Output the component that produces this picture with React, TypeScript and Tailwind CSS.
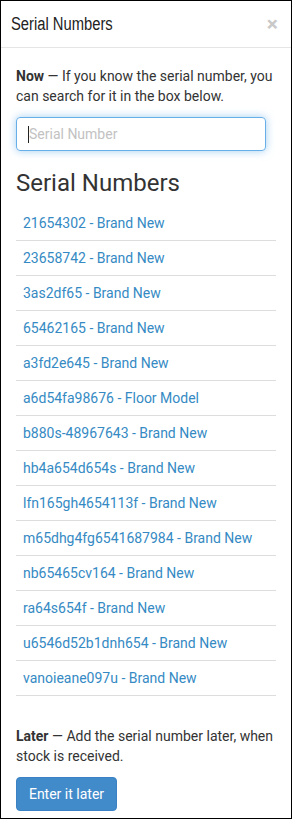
const serials = [
  '21654302 - Brand New',
  '23658742 - Brand New',
  '3as2df65 - Brand New',
  '65462165 - Brand New',
  'a3fd2e645 - Brand New',
  'a6d54fa98676 - Floor Model',
  'b880s-48967643 - Brand New',
  'hb4a654d654s - Brand New',
  'lfn165gh4654113f - Brand New',
  'm65dhg4fg6541687984 - Brand New',
  'nb65465cv164 - Brand New',
  'ra64s654f - Brand New',
  'u6546d52b1dnh654 - Brand New',
  'vanoieane097u - Brand New',
];

export default function App() {
  return (
    <div className="h-[819px] w-[292px] border border-black bg-white font-['Roboto',sans-serif] text-[14px] leading-[20px] text-[#333]">
      <div className="flex h-[47px] items-center justify-between border-b border-[#e5e5e5] pl-[10px] pr-[13px]">
        {/* narrow face isn't installed, so squeeze Liberation Sans */}
        <h4 className="origin-left scale-x-[0.82] whitespace-nowrap font-['Liberation_Sans_Narrow','Liberation_Sans',sans-serif] text-[18px] leading-none text-[#222]">
          Serial Numbers
        </h4>
        <button type="button" className="text-[21px] font-bold leading-none text-[#c9c9c9]">
          ×
        </button>
      </div>

      <div className="px-[15px] pt-[18px]">
        <p className="mb-[11px]">
          <strong className="font-bold">Now</strong> — If you know the serial number, you can search
          for it in the box below.
        </p>

        <div className="relative w-[250px]">
          <input
            type="text"
            placeholder="Serial Number"
            className="h-[34px] w-full rounded-[4px] border border-[#66afe9] px-[12px] text-[14px] shadow-[0_0_8px_rgba(102,175,233,0.6)] outline-none placeholder:text-[#c2c2c2]"
          />
          <span className="pointer-events-none absolute left-[12px] top-[9px] h-[17px] w-px bg-[#222]" />
        </div>

        <h3 className="mb-[10px] mt-[19px] text-[24px] leading-[26px] font-normal text-[#333]">
          Serial Numbers
        </h3>

        <ul>
          {serials.map((s) => (
            <li key={s} className="flex h-[35px] items-center border-b border-[#dddddd] pl-[7px]">
              <a href="#" className="text-[#358ac4]">
                {s}
              </a>
            </li>
          ))}
        </ul>

        <p className="mb-[11px] mt-[30px]">
          <strong className="font-bold">Later</strong> — Add the serial number later, when stock is
          received.
        </p>

        <button
          type="button"
          className="h-[34px] w-[101px] rounded-[4px] border border-[#3a82c4] bg-[#428bca] text-[14px] text-white"
        >
          Enter it later
        </button>
      </div>
    </div>
  );
}
